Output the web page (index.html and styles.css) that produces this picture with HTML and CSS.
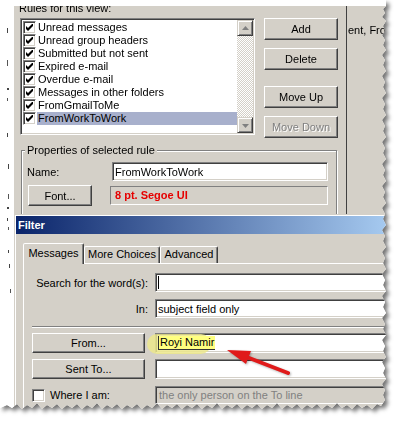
FILE: index.html
```html
<!DOCTYPE html>
<html lang="en">
<head>
    <meta charset="UTF-8">
    <title>Rules and Filter</title>
    <link rel="stylesheet" href="styles.css">
</head>
<body>

    <div class="paper">
        <div class="sheet">
            <div class="strip"></div>

            <div class="main">
                <!-- Rules dialog (behind) -->
                <div class="top">
                    <div class="rules">
                        <div class="rules-label">Rules for this view:</div>
                        <div class="rules-row">
                            <div class="listbox">
                                <ul class="rule-list">
                                    <li class="rule"><span class="check"><svg width="7" height="7" viewBox="0 0 7 7"><polygon points="0,2 2,4 7,-1 7,2 2,7 0,5" fill="#000"/></svg></span><span class="rule-name">Unread messages</span></li>
                                    <li class="rule"><span class="check"><svg width="7" height="7" viewBox="0 0 7 7"><polygon points="0,2 2,4 7,-1 7,2 2,7 0,5" fill="#000"/></svg></span><span class="rule-name">Unread group headers</span></li>
                                    <li class="rule"><span class="check"><svg width="7" height="7" viewBox="0 0 7 7"><polygon points="0,2 2,4 7,-1 7,2 2,7 0,5" fill="#000"/></svg></span><span class="rule-name">Submitted but not sent</span></li>
                                    <li class="rule"><span class="check"><svg width="7" height="7" viewBox="0 0 7 7"><polygon points="0,2 2,4 7,-1 7,2 2,7 0,5" fill="#000"/></svg></span><span class="rule-name">Expired e-mail</span></li>
                                    <li class="rule"><span class="check"><svg width="7" height="7" viewBox="0 0 7 7"><polygon points="0,2 2,4 7,-1 7,2 2,7 0,5" fill="#000"/></svg></span><span class="rule-name">Overdue e-mail</span></li>
                                    <li class="rule"><span class="check"><svg width="7" height="7" viewBox="0 0 7 7"><polygon points="0,2 2,4 7,-1 7,2 2,7 0,5" fill="#000"/></svg></span><span class="rule-name">Messages in other folders</span></li>
                                    <li class="rule"><span class="check"><svg width="7" height="7" viewBox="0 0 7 7"><polygon points="0,2 2,4 7,-1 7,2 2,7 0,5" fill="#000"/></svg></span><span class="rule-name">FromGmailToMe</span></li>
                                    <li class="rule"><span class="check"><svg width="7" height="7" viewBox="0 0 7 7"><polygon points="0,2 2,4 7,-1 7,2 2,7 0,5" fill="#000"/></svg></span><span class="rule-name selected">FromWorkToWork</span></li>
                                </ul>
                                <div class="scrollbar">
                                    <div class="sb-btn"><svg width="7" height="5" viewBox="0 0 7 5"><polygon points="3.5,0 7,4 0,4" fill="#808080"/></svg></div>
                                    <div class="sb-track"></div>
                                    <div class="sb-btn"><svg width="7" height="5" viewBox="0 0 7 5"><polygon points="0,1 7,1 3.5,5" fill="#808080"/></svg></div>
                                </div>
                            </div>
                            <div class="rule-buttons">
                                <button class="btn">Add</button>
                                <button class="btn btn-delete">Delete</button>
                                <button class="btn btn-up">Move Up</button>
                                <button class="btn btn-down" disabled>Move Down</button>
                            </div>
                        </div>

                        <div class="group">
                            <div class="group-label">Properties of selected rule</div>
                            <div class="field-row name-row">
                                <span class="field-label">Name:</span>
                                <div class="edit name-edit">FromWorkToWork</div>
                            </div>
                            <div class="field-row font-row">
                                <button class="btn font-btn">Font...</button>
                                <div class="static-field">8 pt. Segoe UI</div>
                            </div>
                        </div>
                    </div>
                    <div class="behind">ent, Fro</div>
                </div>

                <!-- Filter dialog (front) -->
                <div class="filter">
                    <div class="titlebar">Filter</div>
                    <div class="filter-body">
                        <div class="tabs">
                            <div class="tab active">Messages</div>
                            <div class="tab tab-more">More Choices</div>
                            <div class="tab tab-adv">Advanced</div>
                        </div>
                        <div class="tab-panel">
                            <div class="form-row search-row">
                                <label class="form-label">Search for the word(s):</label>
                                <div class="edit"><span class="caret"></span></div>
                            </div>
                            <div class="form-row in-row">
                                <label class="form-label">In:</label>
                                <div class="edit">subject field only</div>
                            </div>
                            <div class="separator"></div>
                            <div class="form-row btn-row from-row">
                                <button class="btn wide-btn">From...</button>
                                <div class="edit from-edit"><span class="marker"></span><span class="hilite">Royi Namir</span></div>
                            </div>
                            <div class="form-row btn-row sent-row">
                                <button class="btn wide-btn">Sent To...</button>
                                <div class="edit"></div>
                            </div>
                            <div class="form-row where-row">
                                <span class="check"></span>
                                <span class="where-label">Where I am:</span>
                                <div class="edit disabled">the only person on the To line</div>
                            </div>
                        </div>
                    </div>
                </div>
            </div>
        </div>
    </div>

    <svg class="arrow" width="400" height="424" viewBox="0 0 400 424">
        <line x1="288" y1="373" x2="244" y2="356" stroke="#e01a1a" stroke-width="4" stroke-linecap="round"/>
        <polygon points="227,350 251,351 246,364" fill="#e01a1a"/>
    </svg>

</body>
</html>
```

FILE: styles.css
```css
* {
    box-sizing: border-box;
}

body {
    margin: 0;
    width: 400px;
    height: 424px;
    overflow: hidden;
    position: relative;
    background: #fff;
    color: #000;
    font-family: "Liberation Sans", Arial, sans-serif;
    font-size: 11px;
}

/* torn screenshot */
.paper {
    width: 388px;
    height: 412px;
    filter: drop-shadow(3px 3px 2px rgba(0, 0, 0, 0.55));
}

.sheet {
    display: flex;
    width: 388px;
    height: 412px;
    background: #fff;
    overflow: hidden;
    clip-path: polygon(0 0, 386px 0, 386px 6px, 383px 9px, 385px 13px, 382px 17px, 386px 21px, 383px 26px, 385px 31px, 382px 35px, 385px 40px, 383px 45px, 386px 50px, 382px 55px, 385px 60px, 383px 65px, 386px 71px, 382px 76px, 385px 82px, 383px 87px, 386px 93px, 382px 98px, 385px 104px, 383px 109px, 386px 115px, 382px 120px, 385px 126px, 383px 131px, 386px 137px, 382px 142px, 385px 148px, 383px 153px, 386px 159px, 382px 164px, 385px 170px, 383px 175px, 386px 181px, 382px 186px, 385px 192px, 383px 197px, 386px 203px, 382px 208px, 385px 214px, 383px 219px, 386px 225px, 382px 230px, 385px 236px, 383px 241px, 386px 247px, 382px 252px, 385px 258px, 383px 263px, 386px 269px, 382px 274px, 385px 280px, 383px 285px, 386px 291px, 382px 296px, 385px 302px, 383px 307px, 386px 313px, 382px 318px, 385px 324px, 383px 329px, 386px 335px, 382px 340px, 385px 346px, 383px 351px, 386px 357px, 382px 362px, 385px 368px, 383px 373px, 386px 379px, 382px 384px, 385px 390px, 383px 395px, 385px 400px, 381px 406px, 377px 404px, 372px 409px, 367px 405px, 362px 408px, 357px 404px, 352px 409px, 347px 405px, 342px 408px, 337px 403px, 332px 408px, 327px 405px, 322px 409px, 317px 404px, 312px 408px, 307px 405px, 302px 409px, 297px 404px, 292px 408px, 287px 405px, 282px 409px, 277px 403px, 272px 408px, 267px 405px, 262px 409px, 257px 404px, 252px 408px, 247px 405px, 242px 409px, 237px 404px, 232px 408px, 227px 405px, 222px 409px, 217px 403px, 212px 408px, 207px 405px, 202px 409px, 197px 404px, 192px 408px, 187px 405px, 182px 409px, 177px 404px, 172px 408px, 167px 405px, 162px 409px, 157px 403px, 152px 408px, 147px 405px, 142px 409px, 137px 404px, 132px 408px, 127px 405px, 122px 409px, 117px 404px, 112px 408px, 107px 405px, 102px 409px, 97px 403px, 92px 408px, 87px 405px, 82px 409px, 77px 404px, 72px 408px, 67px 405px, 62px 409px, 57px 404px, 52px 408px, 47px 405px, 42px 409px, 37px 403px, 32px 408px, 27px 405px, 22px 409px, 17px 404px, 12px 408px, 7px 405px, 0 408px);
}

/* bits of the window underneath */
.strip {
    width: 14px;
    flex: none;
    background:
        linear-gradient(#444, #444) 7px 28px / 1px 5px no-repeat,
        linear-gradient(#555, #555) 7px 60px / 1px 6px no-repeat,
        linear-gradient(#444, #444) 7px 88px / 2px 2px no-repeat,
        linear-gradient(#555, #555) 7px 98px / 1px 3px no-repeat,
        linear-gradient(#444, #444) 7px 133px / 1px 4px no-repeat,
        linear-gradient(#444, #444) 8px 164px / 1px 5px no-repeat,
        linear-gradient(#555, #555) 8px 194px / 1px 5px no-repeat,
        linear-gradient(#444, #444) 7px 207px / 2px 2px no-repeat,
        linear-gradient(#444, #444) 7px 218px / 1px 3px no-repeat,
        linear-gradient(#555, #555) 8px 227px / 1px 3px no-repeat,
        linear-gradient(#444, #444) 8px 250px / 1px 3px no-repeat,
        linear-gradient(#444, #444) 9px 264px / 1px 4px no-repeat,
        linear-gradient(#555, #555) 10px 289px / 1px 4px no-repeat,
        #fff;
}

.main {
    flex: 1;
    min-width: 0;
    display: flex;
    flex-direction: column;
}

.top {
    display: flex;
    flex: none;
    height: 208px;
    margin-top: 6px;
    overflow: hidden;
    background: #d4d0c8;
}

.rules {
    width: 333px;
    flex: none;
    border-right: 1px solid #404040;
}

.rules-label {
    margin: -4px 0 0 5px;
    line-height: 13px;
}

.rules-row {
    display: flex;
    margin: 3px 0 0 6px;
}

/* list of rules */
.listbox {
    display: flex;
    width: 235px;
    height: 117px;
    padding: 1px;
    background: #fff;
    border: 1px solid;
    border-color: #808080 #fff #fff #808080;
    box-shadow: inset 1px 1px #404040, inset -1px -1px #d4d0c8;
}

.rule-list {
    flex: 1;
    margin: 0;
    padding: 1px 0 0 1px;
    list-style: none;
}

.rule {
    display: flex;
    align-items: center;
    height: 13px;
}

.check {
    display: flex;
    align-items: center;
    justify-content: center;
    flex: none;
    width: 13px;
    height: 13px;
    background: #fff;
    border: 1px solid;
    border-color: #808080 #fff #fff #808080;
    box-shadow: inset 1px 1px #404040, inset -1px -1px #d4d0c8;
}

.rule-name {
    flex: 1;
    height: 13px;
    margin-left: 1px;
    padding-left: 1px;
    line-height: 13px;
    white-space: nowrap;
}

.rule-name.selected {
    background: #a8b0cc;
}

.scrollbar {
    display: flex;
    flex-direction: column;
    width: 16px;
    flex: none;
}

.sb-btn {
    display: flex;
    align-items: center;
    justify-content: center;
    height: 16px;
    background: #d4d0c8;
    border: 1px solid;
    border-color: #d4d0c8 #404040 #404040 #d4d0c8;
    box-shadow: inset 1px 1px #fff, inset -1px -1px #808080;
}

.sb-track {
    flex: 1;
    background: conic-gradient(#fff 25%, #d4d0c8 0 50%, #fff 0 75%, #d4d0c8 0) 0 0 / 2px 2px;
}

/* push buttons */
.btn {
    display: block;
    padding: 0;
    font-family: inherit;
    font-size: 11px;
    color: #000;
    background: #d4d0c8;
    border: 1px solid;
    border-color: #fff #404040 #404040 #fff;
    box-shadow: inset -1px -1px #808080;
    text-align: center;
}

.rule-buttons {
    display: flex;
    flex-direction: column;
    margin-left: 9px;
}

.rule-buttons .btn {
    width: 74px;
    height: 22px;
}

.btn-delete,
.btn-down {
    margin-top: 8px;
}

.btn-up {
    margin-top: 16px;
}

.btn:disabled {
    color: #808080;
    text-shadow: 1px 1px #fff;
}

/* group box */
.group {
    width: 316px;
    height: 80px;
    margin: 12px 0 0 7px;
    padding-left: 5px;
    border: 1px solid #808080;
    box-shadow: 1px 1px 0 #fff, inset 1px 1px 0 #fff;
}

.group-label {
    width: fit-content;
    margin: -7px 0 0 -2px;
    padding: 0 2px;
    line-height: 13px;
    background: #d4d0c8;
}

.field-row {
    display: flex;
    align-items: center;
}

.name-row {
    margin-top: 5px;
}

.field-label {
    width: 85px;
}

.name-edit {
    width: 216px;
    height: 19px;
    flex: none !important;
}

.font-row {
    margin-top: 4px;
}

.font-btn {
    width: 64px;
    height: 21px;
    margin-left: 1px;
}

.static-field {
    width: 218px;
    height: 19px;
    margin-left: 18px;
    padding-left: 4px;
    line-height: 17px;
    color: #e60000;
    font-weight: bold;
    border: 1px solid;
    border-color: #808080 #fff #fff #808080;
}

.behind {
    flex: 1;
    padding: 18px 0 0 1px;
    line-height: 13px;
    white-space: nowrap;
    overflow: hidden;
}

/* filter window */
.filter {
    flex: 1;
    padding: 1px 0 0 1px;
    background: #d4d0c8;
    border-top: 1px solid #d4d0c8;
    border-left: 1px solid #d4d0c8;
    box-shadow: inset 1px 1px #fff;
}

.titlebar {
    height: 18px;
    padding-left: 2px;
    line-height: 18px;
    color: #fff;
    font-weight: bold;
    background: linear-gradient(90deg, #0a246a, #a6caf0);
}

.filter-body {
    padding-left: 7px;
}

.tabs {
    display: flex;
    align-items: flex-end;
    height: 20px;
    margin-top: 9px;
}

.tab {
    height: 17px;
    line-height: 15px;
    text-align: center;
    white-space: nowrap;
    border: 1px solid;
    border-bottom: none;
    border-color: #fff #404040 transparent #fff;
    border-radius: 2px 2px 0 0;
    box-shadow: inset -1px 0 #808080;
}

.tab.active {
    position: relative;
    z-index: 1;
    width: 61px;
    height: 21px;
    margin-bottom: -1px;
    line-height: 19px;
    background: #d4d0c8;
}

.tab-more {
    width: 76px;
}

.tab-adv {
    width: 58px;
}

.tab-panel {
    height: 200px;
    border-top: 1px solid #fff;
    border-left: 1px solid #fff;
}

.form-row {
    display: flex;
    align-items: center;
    height: 19px;
}

.search-row {
    margin-top: 9px;
}

.in-row {
    margin-top: 7px;
}

.form-label {
    width: 125px;
    padding-right: 1px;
    text-align: right;
}

.edit {
    flex: 1;
    display: flex;
    align-items: center;
    height: 19px;
    padding-left: 2px;
    white-space: nowrap;
    background: #fff;
    border: 1px solid;
    border-color: #808080 #fff #fff #808080;
    box-shadow: inset 1px 1px #404040, inset -1px -1px #d4d0c8;
}

.form-label + .edit {
    margin-left: 6px;
}

.caret {
    width: 1px;
    height: 13px;
    background: #000;
}

.separator {
    height: 2px;
    margin: 8px 0 0 8px;
    border-top: 1px solid #808080;
    border-bottom: 1px solid #fff;
}

.btn-row {
    height: 20px;
}

.from-row {
    margin-top: 5px;
}

.sent-row {
    margin-top: 6px;
}

.wide-btn {
    width: 113px;
    height: 20px;
    margin-left: 8px;
}

.wide-btn + .edit {
    height: 20px;
    margin-left: 10px;
}

.from-edit {
    position: relative;
}

/* yellow marker annotation */
.marker {
    position: absolute;
    left: -9px;
    top: 0;
    width: 64px;
    height: 20px;
    border-radius: 10px;
    background: rgba(236, 232, 140, 0.85);
}

.hilite {
    position: relative;
    padding: 0 1px;
    line-height: 13px;
    background: #ffff80;
    border-left: 1px solid #333;
    border-bottom: 1px solid #333;
}

.where-row {
    height: 18px;
    margin-top: 7px;
}

.where-row .check {
    margin-left: 8px;
}

.where-label {
    width: 105px;
    margin-left: 5px;
}

.edit.disabled {
    height: 18px;
    padding-left: 3px;
    color: #808080;
    background: #d4d0c8;
}

/* red arrow annotation */
.arrow {
    position: absolute;
    top: 0;
    left: 0;
    pointer-events: none;
    filter: drop-shadow(1px 1px 1px rgba(0, 0, 0, 0.3));
}
```
